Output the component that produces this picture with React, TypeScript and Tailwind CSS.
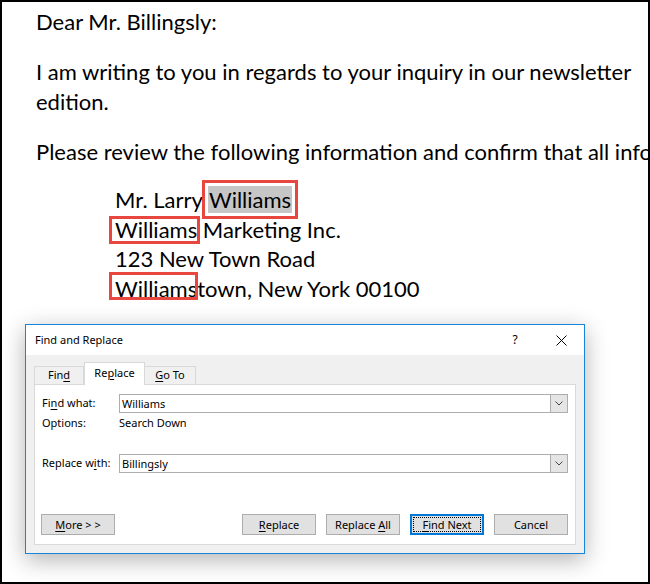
import React from 'react';

function Key({ children }: { children: React.ReactNode }) {
  return <span className="underline underline-offset-2">{children}</span>;
}

function Mark({ className, children }: { className: string; children: React.ReactNode }) {
  return (
    <span className="relative">
      {children}
      <span className={`absolute border-[3px] border-[#e8473f] ${className}`} />
    </span>
  );
}

function Combo({ value }: { value: string }) {
  return (
    <div className="flex-1 h-[19px] flex border border-[#adadad] bg-white">
      <div className="flex-1 pl-[2px] leading-[17px]">{value}</div>
      <div className="w-[17px] h-[17px] bg-[#e5e5e5] border-l border-[#adadad] flex items-center justify-center">
        <svg width="8" height="5" viewBox="0 0 8 5">
          <path d="M0.5 0.5 L4 4 L7.5 0.5" fill="none" stroke="#444" strokeWidth="1" />
        </svg>
      </div>
    </div>
  );
}

function Button({ children, focused }: { children: React.ReactNode; focused?: boolean }) {
  if (focused) {
    return (
      <div className="w-[74px] h-[21px] border-2 border-[#0078d7] bg-[#e1e1e1] p-[1px]">
        <div className="h-full border border-dotted border-black flex items-center justify-center leading-none">
          <span>{children}</span>
        </div>
      </div>
    );
  }
  return (
    <div className="w-[74px] h-[21px] border border-[#adadad] bg-[#e1e1e1] flex items-center justify-center leading-none">
      <span>{children}</span>
    </div>
  );
}

function Dialog() {
  return (
    <div className="absolute left-[23px] top-[322px] w-[560px] h-[230px] border border-[#1883d7] bg-[#f0f0f0] flex flex-col shadow-[0_6px_22px_rgba(0,0,0,0.3)] font-['Noto_Sans',sans-serif] text-[11px] text-black">
      <div className="h-[30px] bg-white flex items-center shrink-0">
        <div className="pl-[9px] flex-1">Find and Replace</div>
        <div className="w-[46px] text-center text-[12px]">?</div>
        <div className="w-[46px] flex items-center justify-center">
          <svg width="11" height="11" viewBox="0 0 11 11">
            <path d="M0.5 0.5 L10.5 10.5 M10.5 0.5 L0.5 10.5" stroke="#000" strokeWidth="1" />
          </svg>
        </div>
      </div>
      <div className="flex items-end h-[29px] pl-[8px] shrink-0">
        <div className="w-[50px] h-[18px] border border-b-0 border-[#d9d9d9] flex items-center justify-center">
          <span>Fin<Key>d</Key></span>
        </div>
        <div className="w-[61px] h-[23px] border border-b-0 border-[#d9d9d9] bg-white flex items-center justify-center -mb-[1px] relative z-10 pb-[2px]">
          <span>Re<Key>p</Key>lace</span>
        </div>
        <div className="w-[51px] h-[18px] border border-b-0 border-l-0 border-[#d9d9d9] flex items-center justify-center">
          <span><Key>G</Key>o To</span>
        </div>
      </div>
      <div className="mx-[8px] h-[161px] border border-[#d9d9d9] bg-white pt-[9px] px-[7px]">
        <div className="flex items-center h-[19px]">
          <div className="w-[77px]">Fi<Key>n</Key>d what:</div>
          <Combo value="Williams" />
        </div>
        <div className="flex items-center h-[20px]">
          <div className="w-[77px]">Options:</div>
          <div>Search Down</div>
        </div>
        <div className="flex items-center h-[19px] mt-[21px]">
          <div className="w-[77px]">Replace w<Key>i</Key>th:</div>
          <Combo value="Billingsly" />
        </div>
        <div className="flex mt-[41px] -ml-[1px]">
          <Button>
            <Key>M</Key>ore &gt; &gt;
          </Button>
          <div className="flex-1" />
          <div className="flex gap-[10px]">
            <Button>
              <Key>R</Key>eplace
            </Button>
            <Button>
              Replace <Key>A</Key>ll
            </Button>
            <Button focused>
              <Key>F</Key>ind Next
            </Button>
            <Button>Cancel</Button>
          </div>
        </div>
      </div>
    </div>
  );
}

export default function App() {
  return (
    <div className="w-[650px] h-[584px] relative overflow-hidden bg-white border-2 border-black">
      <div className="pl-[34px] pt-[5px] font-['Lato',sans-serif] text-[22px] leading-[29.5px] text-black whitespace-nowrap">
        <p>Dear Mr. Billingsly:</p>
        <p className="mt-[20.5px]">I am writing to you in regards to your inquiry in our newsletter</p>
        <p>edition.</p>
        <p className="mt-[20.5px]">Please review the following information and confirm that all information is correct.</p>
        <div className="mt-[19px] pl-[79px]">
          <p>
            Mr. Larry{' '}
            <Mark className="-left-[6px] -right-[6px] -top-[6px] -bottom-[6px]">
              <span className="bg-[#c6c6c6] px-[1px]">Williams</span>
            </Mark>
          </p>
          <p>
            <Mark className="-left-[6px] -right-[3px] top-0 -bottom-[1px]">Williams</Mark> Marketing Inc.
          </p>
          <p>123 New Town Road</p>
          <p>
            <Mark className="-left-[6px] -right-[1px] -top-[3px] bottom-[2px]">Williams</Mark>town, New York 00100
          </p>
        </div>
      </div>
      <Dialog />
    </div>
  );
}
